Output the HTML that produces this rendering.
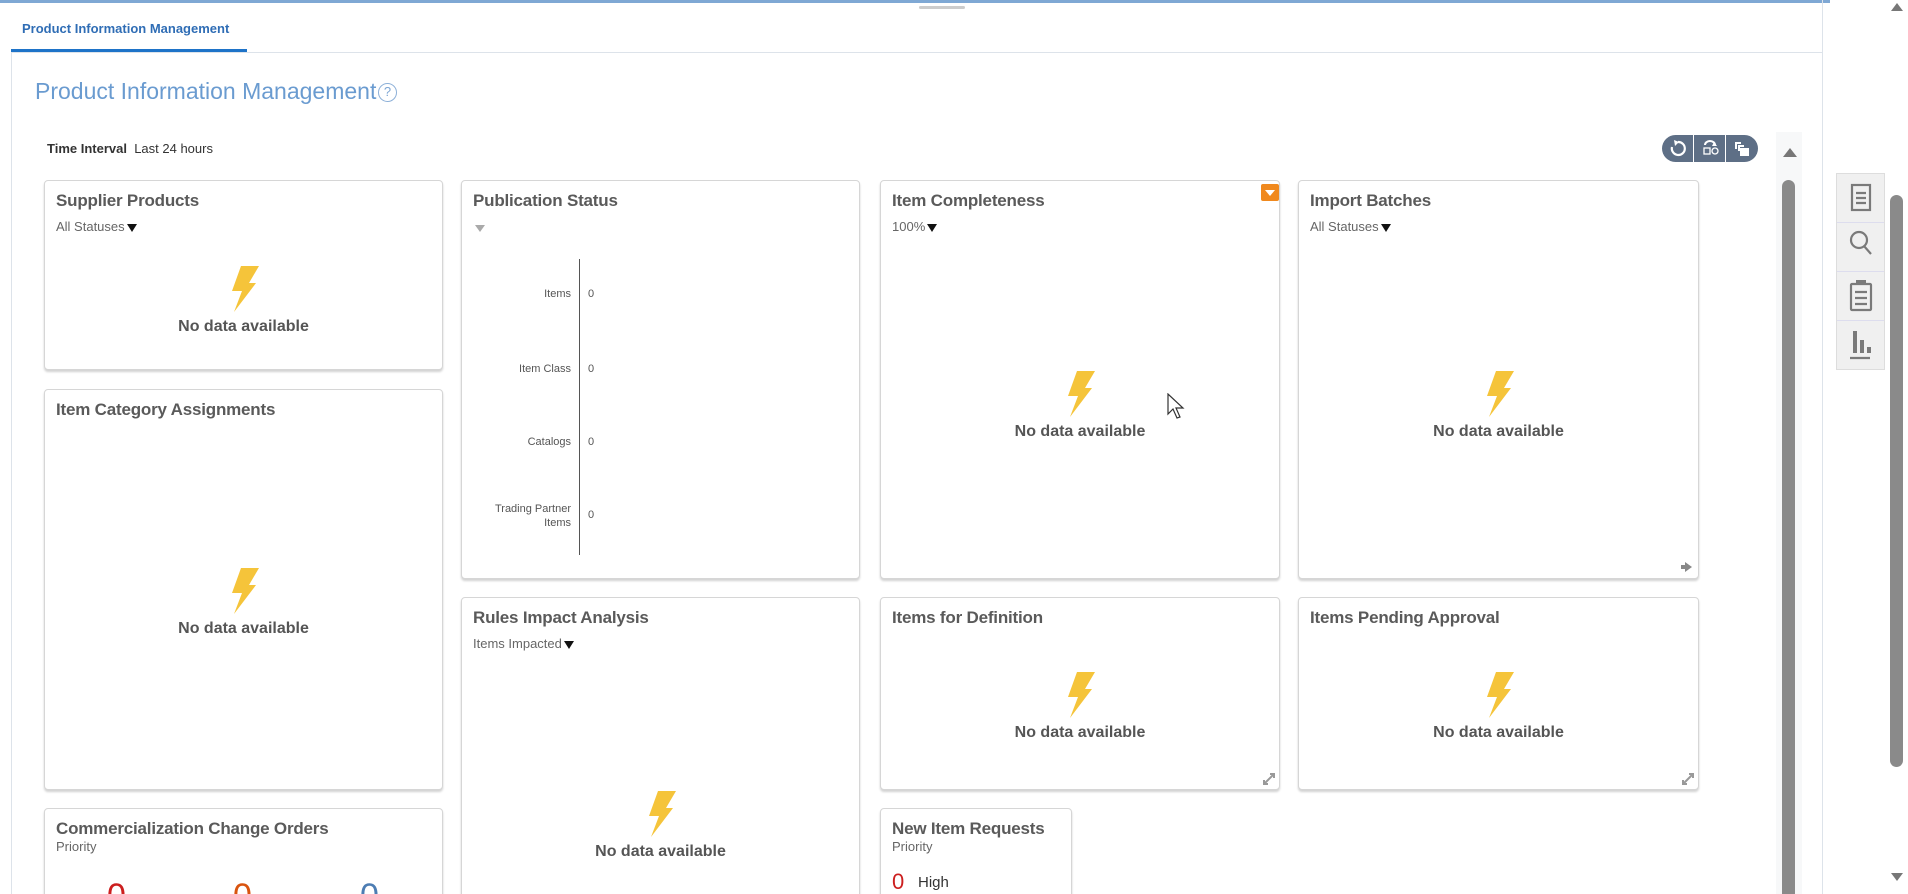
<!DOCTYPE html>
<html style="width:1908px;height:894px;overflow:hidden"><head><meta charset="utf-8"><style>
*{box-sizing:border-box;margin:0;padding:0}
body{width:1908px;height:894px;overflow:hidden;background:#fff;font-family:"Liberation Sans",Arial,sans-serif;position:relative;color:#555}
.a{position:absolute}
.card{position:absolute;border:1px solid #d6d6d6;border-radius:4px;background:#fff;box-shadow:0 2px 2px rgba(0,0,0,.18);overflow:hidden}
.card h3{position:absolute;left:11px;top:10px;font-size:17px;font-weight:bold;color:#5a5a5a;letter-spacing:-.2px}
.sub{position:absolute;left:11px;top:38px;font-size:13px;color:#666}
.sub b{display:inline-block;width:0;height:0;border-left:5px solid transparent;border-right:5px solid transparent;border-top:8px solid #111;margin-left:2px;vertical-align:-1px}
.nd{position:absolute;left:0;right:0;top:0;bottom:0;padding-top:52px;display:flex;flex-direction:column;align-items:center;justify-content:center}
.nd.ns{padding-top:26px}
.nd span{font-size:16px;font-weight:bold;color:#555;margin-top:6px}
.lbl{position:absolute;font-size:11px;color:#555;text-align:right;width:90px}
.z{position:absolute;font-size:11px;color:#555}
</style></head><body>
<div class="a" style="left:0;top:0;width:1830px;height:3px;background:#7fa8d4"></div>
<div class="a" style="left:919px;top:6px;width:46px;height:3px;background:#ccc;border-radius:2px"></div>
<div class="a" style="left:22px;top:21px;font-size:13px;font-weight:bold;color:#2f6db5">Product Information Management</div>
<div class="a" style="left:11px;top:49px;width:236px;height:3px;background:#1e73c8"></div>
<div class="a" style="left:11px;top:52px;width:1812px;height:850px;border:1px solid #dde3ea;border-bottom:none"></div>
<div class="a" style="left:35px;top:78px;font-size:23px;color:#6a9bd0">Product Information Management</div>
<div class="a" style="left:378px;top:83px;width:19px;height:19px;border:1.5px solid #8db0d8;border-radius:50%;font-size:13px;color:#7da6d4;text-align:center;line-height:16px">?</div>
<div class="a" style="left:47px;top:141px;font-size:13px;color:#333"><b>Time Interval</b>&nbsp;&nbsp;Last 24 hours</div>
<div class="a" style="left:1662px;top:135px;width:96px;height:27px;background:#5e6f86;border-radius:14px"></div>
<div class="a" style="left:1693px;top:135px;width:1px;height:27px;background:#fff"></div>
<div class="a" style="left:1725px;top:135px;width:1px;height:27px;background:#fff"></div>
<svg class="a" style="left:1667px;top:137px" width="90" height="23" viewBox="0 0 90 23"><path d="M11 5a6.5 6.5 0 1 1 -6 5" fill="none" stroke="#fff" stroke-width="2.2"/><path d="M7 3l5 2-4 4z" fill="#fff"/><path d="M38 8a5 4 0 0 1 10 0" fill="none" stroke="#fff" stroke-width="2"/><path d="M47 5l3 4h-5z" fill="#fff"/><rect x="37" y="11" width="6" height="6" fill="none" stroke="#fff" stroke-width="1.3"/><circle cx="48" cy="14" r="3" fill="none" stroke="#fff" stroke-width="1.3"/><path d="M68 5h6v2h-4v5h-2zM71 8h6v2h-4v4h-2z" fill="#fff"/><rect x="73" y="11" width="9" height="8" fill="#fff"/></svg>
<div class="a" style="left:1776px;top:132px;width:26px;height:762px;background:#f7f8f9"></div>
<div class="a" style="left:1783px;top:148px;border-left:7px solid transparent;border-right:7px solid transparent;border-bottom:9px solid #777"></div>
<div class="a" style="left:1782px;top:180px;width:13px;height:720px;background:#8a8a8a;border-radius:7px"></div>
<div class="a" style="left:1822px;top:0;width:1px;height:894px;background:#dde3ea"></div>
<div class="a" style="left:1836px;top:173px;width:49px;height:197px;background:#f0f0f0;border:1px solid #ddd"></div>
<div class="a" style="left:1837px;top:222px;width:47px;height:1px;background:#dde"></div>
<div class="a" style="left:1837px;top:271px;width:47px;height:1px;background:#dde"></div>
<div class="a" style="left:1837px;top:320px;width:47px;height:1px;background:#dde"></div>
<svg class="a" style="left:1836px;top:173px" width="49" height="197"><g fill="none" stroke="#7a7a7a" stroke-width="2.2"><rect x="16" y="12" width="18" height="25"/><path d="M20 20h10M20 25h10M20 30h10"/><circle cx="23" cy="67" r="8"/><path d="M28 73l7 8"/><rect x="15" y="111" width="20" height="26" rx="1"/><path d="M19 119h12M19 125h12M19 131h12"/><path d="M14 185h20"/></g><rect x="20" y="107" width="10" height="5" fill="#7a7a7a"/><rect x="17" y="158" width="4" height="22" fill="#7a7a7a"/><rect x="24" y="167" width="4" height="13" fill="#7a7a7a"/><rect x="31" y="174" width="4" height="6" fill="#7a7a7a"/></svg>
<div class="a" style="left:1890px;top:195px;width:13px;height:572px;background:#8a8a8a;border-radius:7px"></div>
<div class="a" style="left:1891px;top:3px;border-left:6px solid transparent;border-right:6px solid transparent;border-bottom:8px solid #777"></div>
<div class="a" style="left:1891px;top:873px;border-left:6px solid transparent;border-right:6px solid transparent;border-top:8px solid #777"></div>

<svg width="0" height="0" style="position:absolute"><defs><symbol id="bolt" viewBox="0 0 32 46"><polygon points="13,0 31,0 21,17 28,17 6,46 14,25 4,25" fill="#f5c43a"/></symbol></defs></svg>

<div class="card" style="left:44px;top:180px;width:399px;height:190px"><h3>Supplier Products</h3><div class="sub">All Statuses<b></b></div><div class="nd"><svg width="32" height="46"><use href="#bolt"/></svg><span>No data available</span></div></div>
<div class="card" style="left:44px;top:389px;width:399px;height:401px"><h3>Item Category Assignments</h3><div class="nd ns"><svg width="32" height="46"><use href="#bolt"/></svg><span>No data available</span></div></div>
<div class="card" style="left:44px;top:808px;width:399px;height:100px"><h3>Commercialization Change Orders</h3><div class="sub" style="top:30px">Priority</div>
<div class="a" style="left:62px;top:68px;font-size:34px;color:#cc1f1f">0</div><div class="a" style="left:188px;top:68px;font-size:34px;color:#d9540f">0</div><div class="a" style="left:315px;top:68px;font-size:34px;color:#4d7db3">0</div></div>

<div class="card" style="left:461px;top:180px;width:399px;height:399px"><h3>Publication Status</h3>
<div class="a" style="left:13px;top:44px;border-left:5px solid transparent;border-right:5px solid transparent;border-top:7px solid #aaa"></div>
<div class="a" style="left:117px;top:78px;width:1px;height:296px;background:#555"></div>
<div class="lbl" style="left:19px;top:107px">Items</div><div class="z" style="left:126px;top:107px">0</div>
<div class="lbl" style="left:19px;top:182px">Item Class</div><div class="z" style="left:126px;top:182px">0</div>
<div class="lbl" style="left:19px;top:255px">Catalogs</div><div class="z" style="left:126px;top:255px">0</div>
<div class="lbl" style="left:19px;top:321px;line-height:14px">Trading Partner<br>Items</div><div class="z" style="left:126px;top:328px">0</div></div>
<div class="card" style="left:461px;top:597px;width:399px;height:310px"><h3>Rules Impact Analysis</h3><div class="sub">Items Impacted<b></b></div>
<div class="a" style="left:0;right:0;top:193px;display:flex;flex-direction:column;align-items:center"><svg width="32" height="46"><use href="#bolt"/></svg><span style="font-size:16px;font-weight:bold;color:#555;margin-top:6px">No data available</span></div></div>

<div class="card" style="left:880px;top:180px;width:400px;height:399px"><h3>Item Completeness</h3><div class="sub">100%<b></b></div>
<div class="a" style="left:380px;top:3px;width:18px;height:17px;background:#f0891e;border-radius:2px"></div><div class="a" style="left:384px;top:9px;border-left:5px solid transparent;border-right:5px solid transparent;border-top:6px solid #fff"></div>
<div class="nd"><svg width="32" height="46"><use href="#bolt"/></svg><span>No data available</span></div></div>
<div class="card" style="left:880px;top:597px;width:400px;height:193px"><h3>Items for Definition</h3><div class="nd ns"><svg width="32" height="46"><use href="#bolt"/></svg><span>No data available</span></div><svg class="a" style="right:4px;bottom:4px" width="12" height="12"><path d="M1 11l10-10M7 1h4v4M1 7v4h4" stroke="#999" stroke-width="2" fill="none"/></svg></div>
<div class="card" style="left:880px;top:808px;width:192px;height:100px"><h3>New Item Requests</h3><div class="sub" style="top:30px">Priority</div><div class="a" style="left:11px;top:60px;font-size:22px;color:#cc1f1f">0</div><div class="a" style="left:37px;top:65px;font-size:15px;color:#333">High</div></div>

<div class="card" style="left:1298px;top:180px;width:401px;height:399px"><h3>Import Batches</h3><div class="sub">All Statuses<b></b></div><div class="nd"><svg width="32" height="46"><use href="#bolt"/></svg><span>No data available</span></div><div class="a" style="right:6px;bottom:6px;width:0;height:0;border-top:5px solid transparent;border-bottom:5px solid transparent;border-left:7px solid #888"></div><div class="a" style="right:12px;bottom:9px;width:5px;height:4px;background:#888"></div></div>
<div class="card" style="left:1298px;top:597px;width:401px;height:193px"><h3>Items Pending Approval</h3><div class="nd ns"><svg width="32" height="46"><use href="#bolt"/></svg><span>No data available</span></div><svg class="a" style="right:4px;bottom:4px" width="12" height="12"><path d="M1 11l10-10M7 1h4v4M1 7v4h4" stroke="#999" stroke-width="2" fill="none"/></svg></div>
<svg class="a" style="left:1167px;top:393px" width="20" height="28"><path d="M1 1v20l5-5 4 9 3-1-4-9h7z" fill="#fff" stroke="#333" stroke-width="1.2"/></svg>
</body></html>
